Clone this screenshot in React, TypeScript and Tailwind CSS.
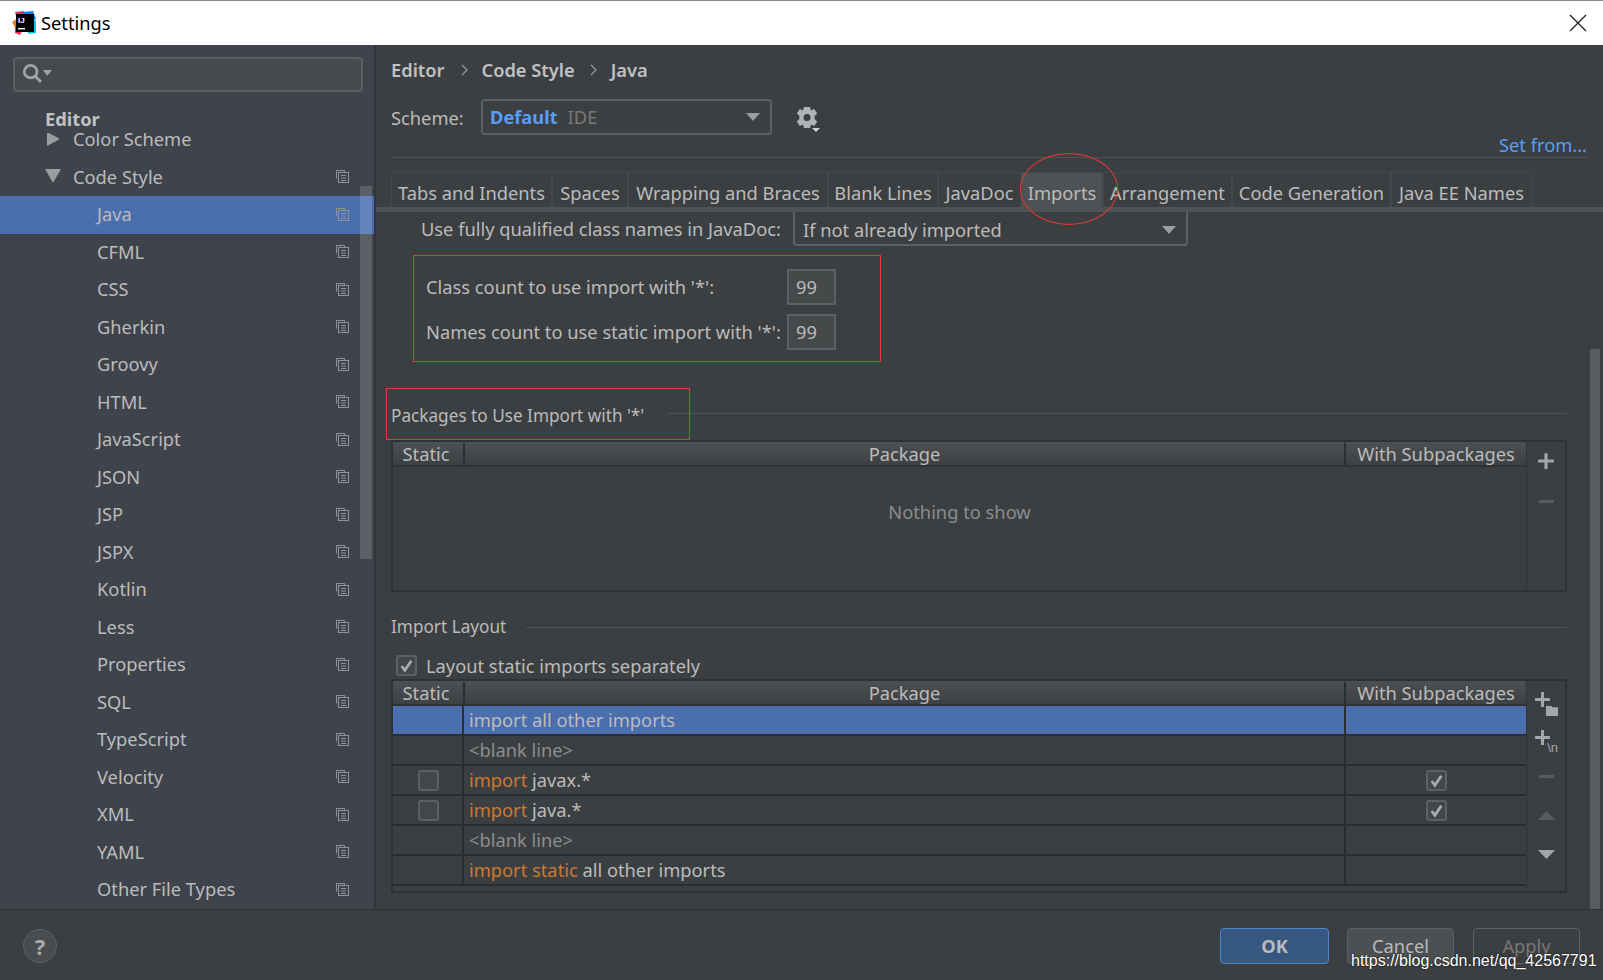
import React from "react";

const sideItems = [
  "CFML", "CSS", "Gherkin", "Groovy", "HTML", "JavaScript", "JSON", "JSP", "JSPX",
  "Kotlin", "Less", "Properties", "SQL", "TypeScript", "Velocity", "XML", "YAML", "Other File Types",
];

const tabs = [
  { label: "Tabs and Indents", cls: "w-[161px]" },
  { label: "Spaces", cls: "w-[76px]" },
  { label: "Wrapping and Braces", cls: "w-[200px]" },
  { label: "Blank Lines", cls: "w-[110px]" },
  { label: "JavaDoc", cls: "w-[83px]" },
  { label: "Imports", cls: "w-[82px] bg-[#4e5254]" },
  { label: "Arrangement", cls: "w-[129px]" },
  { label: "Code Generation", cls: "w-[159px]" },
  { label: "Java EE Names", cls: "w-[141px]" },
];

const CopyIcon = () => (
  <svg width="14" height="14" viewBox="0 0 14 14" fill="none" stroke="#8f9499" strokeWidth="1">
    <path d="M1.5 9.5v-8h8v2" />
    <rect x="3.5" y="3.5" width="10" height="10" fill="none" />
    <path d="M6 6.5h5M6 9h5M6 11.5h5" />
  </svg>
);

const Caret = ({ className = "" }: { className?: string }) => (
  <svg width="14" height="8" viewBox="0 0 14 8" preserveAspectRatio="none" className={className}>
    <path d="M0 0h14L7 8z" fill="#9a9da0" />
  </svg>
);

const Logo = () => (
  <svg width="26" height="26" viewBox="0 0 26 26">
    <path d="M4 2l9-1 2 6-8 6z" fill="#f2295f" />
    <path d="M12 2l10-1 3 8-7 3z" fill="#087cfa" />
    <path d="M1 12l6-4 4 8-6 3z" fill="#f97a12" />
    <path d="M4 16l8 2-3 7-5-2z" fill="#fe2857" />
    <path d="M18 12l7-2 0 13-8 1z" fill="#07c3f2" />
    <rect x="5" y="4" width="18" height="18" fill="#000" />
    <text x="7" y="13" fontSize="8" fontWeight="700" fill="#fff" fontFamily="Liberation Sans">IJ</text>
    <rect x="7" y="18" width="7" height="1.4" fill="#fff" />
  </svg>
);

const Check = ({ checked = false }: { checked?: boolean }) => (
  <div className="flex h-[21px] w-[21px] items-center justify-center rounded-[3px] border-2 border-[#5d6163] bg-[#43474a]">
    {checked && (
      <svg width="15" height="15" viewBox="0 0 14 14">
        <path d="M2.5 7.5l3 4 6-9" fill="none" stroke="#a9acae" strokeWidth="2.6" />
      </svg>
    )}
  </div>
);

const TableHead = () => (
  <div className="flex h-[25px] border-b-2 border-[#2f3133] bg-gradient-to-b from-[#4d5052] to-[#3e4143] pt-[1px] text-[#bbbbbb]">
    <div className="flex w-[72px] items-center justify-center border-r-2 border-[#2b2d2e] pr-1">Static</div>
    <div className="flex w-[881px] items-center justify-center border-r-2 border-[#2b2d2e]">Package</div>
    <div className="flex flex-1 items-center justify-center">With Subpackages</div>
  </div>
);

const Row = ({
  children,
  check,
  sub,
  selected,
}: {
  children: React.ReactNode;
  check?: boolean;
  sub?: boolean;
  selected?: boolean;
}) => (
  <div className={`flex h-[30px] border-b-2 border-[#2b2d2e] ${selected ? "bg-[#4b6eaf]" : ""}`}>
    <div className="flex w-[71px] items-center justify-center border-r-2 border-[#2b2d2e] pl-[2px]">
      {check && <Check />}
    </div>
    <div className="flex w-[882px] items-center border-r-2 border-[#2b2d2e] pl-[5px]">{children}</div>
    <div className="flex flex-1 items-center justify-center">{sub && <Check checked />}</div>
  </div>
);

const Kw = ({ children }: { children: React.ReactNode }) => <span className="text-[#cc7832]">{children}</span>;

const Plus = ({ size = 16 }: { size?: number }) => (
  <svg width={size} height={size} viewBox="0 0 16 16">
    <path d="M8 1v14M1 8h14" stroke="#a4a7a9" strokeWidth="2.8" />
  </svg>
);

const Minus = () => <div className="h-[3px] w-[15px] bg-[#585b5d]" />;

export default function App() {
  return (
    <div className="relative flex h-[980px] w-[1603px] flex-col overflow-hidden bg-[#3c3f41] font-['Noto_Sans',sans-serif] text-[18.3px] text-[#bbbbbb]">
      {/* Title bar */}
      <header className="flex h-[45px] shrink-0 items-center border-t border-[#8a8a8a] bg-white pl-[11px] pr-[16px] text-black">
        <Logo />
        <span className="ml-[4px] text-[18.3px]">Settings</span>
        <svg width="18" height="18" viewBox="0 0 18 18" className="ml-auto">
          <path d="M1 1l16 16M17 1L1 17" stroke="#222" strokeWidth="1.3" />
        </svg>
      </header>

      <div className="flex min-h-0 flex-1">
        {/* Sidebar */}
        <aside className="relative w-[376px] shrink-0 border-r-2 border-[#323437] bg-[#3f434c]">
          <div className="ml-[13px] mr-[11px] mt-[12px] flex h-[35px] items-center rounded-[4px] border-2 border-[#5b5e60] bg-[#474a4c] pl-[7px]">
            <svg width="30" height="23" viewBox="0 0 26 20" fill="none">
              <circle cx="7.5" cy="7.5" r="5.5" stroke="#a0a3a5" strokeWidth="2.4" />
              <path d="M11.5 11.5l5 5" stroke="#a0a3a5" strokeWidth="2.6" />
              <path d="M18 6h8l-4 5z" fill="#a0a3a5" />
            </svg>
          </div>
          <div className="mt-[15px] h-[26px] pl-[45px] font-bold leading-[24px] text-[#c0c2c4]">Editor</div>
          <div className="h-[776px] overflow-hidden">
            <div className="-mt-[12px] flex h-[37.5px] items-center pb-[2px] pl-[47px]">
              <svg width="13" height="14" viewBox="0 0 13 14"><path d="M0 0l13 7-13 7z" fill="#9a9da0" />
              </svg>
              <span className="ml-[13px]">Color Scheme</span>
            </div>
            <div className="flex h-[37.5px] items-center pb-[2px] pl-[45px] pr-[25px]">
              <Caret className="h-[14px] w-[16px]" />
              <span className="ml-[12px]">Code Style</span>
              <span className="ml-auto"><CopyIcon /></span>
            </div>
            <div className="flex h-[37.5px] items-center bg-[#4b6eaf] pb-[2px] pl-[97px] pr-[25px]">
              <span>Java</span>
              <span className="ml-auto"><CopyIcon /></span>
            </div>
            {sideItems.map((item) => (
              <div key={item} className="flex h-[37.5px] items-center pb-[2px] pl-[97px] pr-[25px]">
                <span>{item}</span>
                <span className="ml-auto"><CopyIcon /></span>
              </div>
            ))}
          </div>
          <div className="absolute left-[360px] top-[141px] h-[373px] w-[12px] bg-white/15" />
        </aside>

        {/* Main panel */}
        <main className="relative min-w-0 flex-1">
          <div className="flex h-[50px] items-center pl-[15px] font-semibold text-[#bfc1c3]">
            <span>Editor</span>
            <svg width="8" height="12" viewBox="0 0 8 12" className="ml-[17px] mr-[12px]"><path d="M1 1l5 5-5 5" fill="none" stroke="#9a9da0" strokeWidth="1.2" /></svg>
            <span>Code Style</span>
            <svg width="8" height="12" viewBox="0 0 8 12" className="ml-[15px] mr-[13px]"><path d="M1 1l5 5-5 5" fill="none" stroke="#9a9da0" strokeWidth="1.2" /></svg>
            <span>Java</span>
          </div>
          <div className="mt-[4px] flex h-[36px] items-center pl-[15px]">
            <span className="w-[90px] pt-[2px]">Scheme:</span>
            <div className="flex h-[36px] w-[291px] items-center rounded-[4px] border-2 border-[#5d6163] pl-[7px] pr-[10px]">
              <span className="font-bold text-[#589df6]">Default</span>
              <span className="ml-[10px] text-[#787878]">IDE</span>
              <Caret className="ml-auto" />
            </div>
            <svg width="26" height="26" viewBox="0 0 26 26" className="ml-[23px] mt-[4px]">
              <path d="M9 1h6l1 3.5 3.2-1.5 3 4.5-2.6 2.5v3l2.6 2.5-3 4.5-3.200-1.500L15 22H9l-1-3.500-3.200 1.500-3-4.500L4.400 13v-3L1.800 7.500l3-4.500L8 4.500z" fill="#b0b3b5" />
              <circle cx="12" cy="11.500" r="3.500" fill="#3c3f41" />
              <path d="M17 22h8l-4 4z" fill="#d0d2d4" />
            </svg>
          </div>
          <div className="ml-[15px] mr-[16px] flex h-[23px] items-center justify-end border-b border-[#505355] pb-[3px] text-[#589df6]">
            Set from...
          </div>
          <div className="mt-[14px] flex h-[40px] border-b-[5px] border-[#4e5254] pl-[15px]">
            {tabs.map((t) => (
              <div key={t.label} className={`flex items-center justify-center whitespace-nowrap border-x border-t border-[#45484a] pt-[6px] ${t.cls}`}>
                {t.label}
              </div>
            ))}
          </div>

          <div className="flex h-[34px] items-center pl-[45px]">
            <span className="w-[372px] whitespace-nowrap">Use fully qualified class names in JavaDoc:</span>
            <div className="flex h-[34px] w-[395px] items-center rounded-b-[4px] border-x-2 border-b-2 border-[#5d6163] pl-[8px] pr-[10px] pt-[4px]">
              If not already imported
              <Caret className="ml-auto" />
            </div>
          </div>

          <div className="ml-[50px] mt-[23px] flex h-[36px] items-center">
            <span className="w-[361px] whitespace-nowrap">Class count to use import with '*':</span>
            <div className="flex h-[36px] w-[49px] items-center border-2 border-[#5d6163] bg-[#45494a] pl-[7px]">99</div>
          </div>
          <div className="ml-[50px] mt-[9px] flex h-[36px] items-center">
            <span className="w-[361px] whitespace-nowrap">Names count to use static import with '*':</span>
            <div className="flex h-[36px] w-[49px] items-center border-2 border-[#5d6163] bg-[#45494a] pl-[7px]">99</div>
          </div>

          <div className="ml-[15px] mr-[36px] mt-[50px] flex h-[40px] items-center text-[17.2px]">
            <span className="mb-[8px] whitespace-nowrap">Packages to Use Import with '*'</span>
            <div className="mb-[14px] ml-[24px] h-px flex-1 bg-[#505355]" />
          </div>
          <div className="ml-[15px] mr-[36px] flex h-[152px] border-2 border-[#2f3133]">
            <div className="flex flex-1 flex-col border-r border-[#2f3133]">
              <TableHead />
              <div className="flex flex-1 items-center justify-center pb-[34px] text-[#8a8d8f]">Nothing to show</div>
            </div>
            <div className="flex w-[38px] flex-col items-center pt-[10px]">
              <Plus size={18} />
              <div className="mt-[30px]"><Minus /></div>
            </div>
          </div>

          <div className="ml-[15px] mr-[36px] mt-[23px] flex h-[24px] items-center text-[17.2px]">
            <span>Import Layout</span>
            <div className="ml-[20px] h-px flex-1 bg-[#505355]" />
          </div>
          <div className="ml-[20px] mt-[14px] flex h-[25px] items-center gap-[9px]">
            <Check checked />
            <span>Layout static imports separately</span>
          </div>
          <div className="ml-[15px] mr-[36px] mt-[1px] flex h-[214px] border-2 border-[#2f3133]">
            <div className="flex flex-1 flex-col border-r border-[#2f3133]">
              <TableHead />
              <Row selected>import all other imports</Row>
              <Row><span className="text-[#8a8d8f]">&lt;blank line&gt;</span></Row>
              <Row check sub><Kw>import</Kw>&nbsp;javax.*</Row>
              <Row check sub><Kw>import</Kw>&nbsp;java.*</Row>
              <Row><span className="text-[#8a8d8f]">&lt;blank line&gt;</span></Row>
              <Row><Kw>import static</Kw>&nbsp;all other imports</Row>
            </div>
            <div className="flex w-[38px] flex-col items-center pt-[10px]">
              <div className="relative h-[24px] w-[24px]">
                <Plus size={17} />
                <svg width="12" height="10" viewBox="0 0 11 8" preserveAspectRatio="none" className="absolute -bottom-[1px] right-0"><path d="M0 0h5l1 1h5v7H0z" fill="#a4a7a9" /></svg>
              </div>
              <div className="relative mt-[14px] h-[24px] w-[24px]">
                <Plus size={17} />
                <span className="absolute -bottom-[1px] right-0 font-['Liberation_Sans',sans-serif] text-[13px] leading-none text-[#a4a7a9]">\n</span>
              </div>
              <div className="mt-[22px]"><Minus /></div>
              <svg width="17" height="9" viewBox="0 0 17 9" className="mt-[33px]"><path d="M0 9h17L8.500 0z" fill="#585b5d" /></svg>
              <svg width="17" height="9" viewBox="0 0 17 9" className="mt-[30px]"><path d="M0 0h17L8.500 9z" fill="#a4a7a9" /></svg>
            </div>
          </div>

          <div className="absolute bottom-[0px] right-[3px] h-[560px] w-[10px] bg-[#5a5d5f]" />
        </main>
      </div>

      {/* Footer */}
      <footer className="flex h-[71px] shrink-0 items-center border-t border-[#2f3133] px-[23px] pt-[2px]">
        <div className="flex h-[34px] w-[34px] items-center justify-center rounded-full border border-[#5d6163] bg-[#4a4d4f] text-[22px] font-bold text-[#a9acae]">?</div>
        <button className="ml-auto h-[36px] w-[109px] rounded-[4px] border border-[#4c87c8] bg-[#365880] font-bold text-[#bbbbbb]">OK</button>
        <button className="ml-[18px] h-[36px] w-[107px] rounded-[4px] border border-[#5e6163] bg-[#4c5052]">Cancel</button>
        <button className="ml-[19px] h-[36px] w-[107px] rounded-[4px] border border-[#5e6163] text-[#777777]">Apply</button>
      </footer>

      {/* Annotations drawn over the screenshot */}
      <div className="pointer-events-none absolute left-[413px] top-[255px] h-[107px] w-[468px] border border-[#e53935]" />
      <div className="pointer-events-none absolute left-[386px] top-[388px] h-[52px] w-[304px] border border-[#e53935]" />
      <div className="pointer-events-none absolute left-[1020px] top-[153px] h-[72px] w-[98px] rounded-[50%] border border-[#e53935]" />
      <div className="absolute left-[1351px] top-[951px] whitespace-nowrap font-['Liberation_Sans',sans-serif] text-[16px] leading-[20px] text-white [text-shadow:0_0_2px_#000]">
        https://blog.csdn.net/qq_42567791
      </div>
    </div>
  );
}
